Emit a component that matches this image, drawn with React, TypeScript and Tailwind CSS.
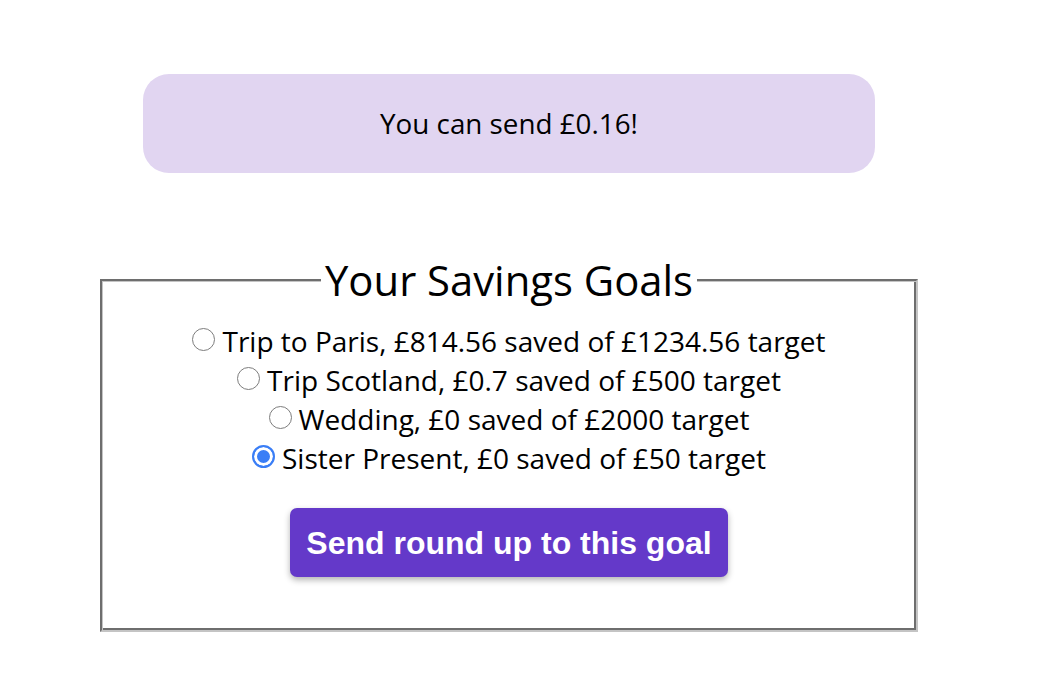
import { useState } from "react";

type Goal = { id: string; name: string; saved: string; target: string };

const GOALS: Goal[] = [
  { id: "paris", name: "Trip to Paris", saved: "814.56", target: "1234.56" },
  { id: "scotland", name: "Trip Scotland", saved: "0.7", target: "500" },
  { id: "wedding", name: "Wedding", saved: "0", target: "2000" },
  { id: "sister", name: "Sister Present", saved: "0", target: "50" },
];

export default function App() {
  const [selected, setSelected] = useState("sister");

  return (
    <div className="min-h-[700px] bg-white font-['Open_Sans','Noto_Sans',sans-serif] text-black">
      <div className="ml-[100px] flex w-[818px] flex-col pt-[74px]">
        {/* Round-up banner */}
        <div className="mx-[43px] flex h-[99px] items-center justify-center rounded-[26px] bg-[#e1d5f1] text-[27.8px]">
          You can send £0.16!
        </div>

        {/* Goals */}
        <fieldset className="mt-[84px] h-[375px] border-2 border-t-[#6e6e6e] border-l-[#6e6e6e] border-r-[#c4c4c4] border-b-[#c4c4c4] text-center shadow-[inset_1px_1px_0_#c4c4c4,inset_-2px_-2px_0_#6e6e6e]">
          <legend className="mx-auto bg-white px-[4px] text-[41.8px] leading-[46px]">Your Savings Goals</legend>
          <div className="mt-[19px] flex flex-col items-center text-[28px] leading-[39px]">
            {GOALS.map((g) => (
              <label key={g.id} className="flex items-center">
                <input
                  type="radio"
                  name="goal"
                  checked={selected === g.id}
                  onChange={() => setSelected(g.id)}
                  className="mr-[7px] mt-[-4px] h-[23px] w-[23px] shrink-0 appearance-none rounded-full border-[1.5px] border-[#7d7d7d] bg-white checked:border-2 checked:border-[#3a7ef6] checked:bg-[#3a7ef6] checked:shadow-[inset_0_0_0_3px_#fff]"
                />
                <span>
                  {g.name}, £{g.saved} saved of £{g.target} target
                </span>
              </label>
            ))}
          </div>
          <button
            type="button"
            className="mt-[30px] h-[69px] w-[438px] rounded-[7px] bg-[#6439c9] font-['Liberation_Sans',Arial,sans-serif] text-[32px] font-bold text-white shadow-[0_3px_6px_rgba(0,0,0,0.3)]"
          >
            Send round up to this goal
          </button>
        </fieldset>
      </div>
    </div>
  );
}
